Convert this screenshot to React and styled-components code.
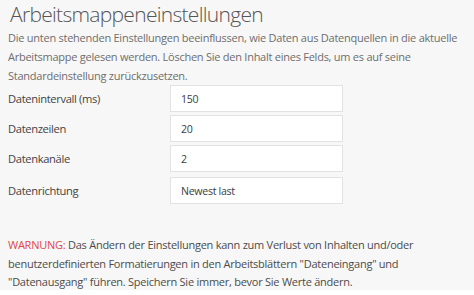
import React from "react";
import styled, { createGlobalStyle } from "styled-components";

const Global = createGlobalStyle`
  html, body { margin: 0; padding: 0; background: #ffffff; }
  body { font-family: "Open Sans", "Noto Sans", sans-serif; }
`;

const Panel = styled.div`
  width: 474px;
  height: 290px;
  background: #f7f7f7;
  box-sizing: border-box;
  padding: 0 8px;
`;

const Title = styled.h1`
  margin: 0;
  padding: 1px 0 0 2px;
  font-family: "Open Sans", sans-serif;
  font-weight: 300;
  font-size: 21px;
  line-height: 27px;
  color: #555555;
  letter-spacing: -0.7px;
`;

const Text = styled.p`
  margin: 0;
  font-size: 11px;
  letter-spacing: -0.25px;
  white-space: nowrap;
`;

const Intro = styled(Text)`
  line-height: 19px;
  color: #6e6e6e;
`;

const Form = styled.div`
  display: flex;
  flex-direction: column;
  gap: 3px;
`;

const Row = styled.div`
  display: flex;
  align-items: center;
  height: 27px;
  margin-top: ${(p) => (p.$extra ? "2px" : "0")};
`;

const Label = styled.label`
  width: 162px;
  font-size: 11.2px;
  letter-spacing: -0.35px;
  color: #444444;
`;

const Field = styled.div`
  width: 173px;
  height: 27px;
  box-sizing: border-box;
  background: #ffffff;
  border: 1px solid #e2e2e2;
  padding: 0 10px;
  display: flex;
  align-items: center;
  font-size: 10.6px;
  letter-spacing: -0.3px;
  color: #3c3c3c;
`;

const Warning = styled(Text)`
  margin-top: 32px;
  line-height: 18.5px;
  color: #4c4c4c;
`;

const Red = styled.span`
  color: #e0454b;
`;

const rows = [
  ["Datenintervall (ms)", "150"],
  ["Datenzeilen", "20"],
  ["Datenkanäle", "2"],
  ["Datenrichtung", "Newest last"],
];

export default function App() {
  return (
    <>
      <Global />
      <Panel>
        <Title>Arbeitsmappeneinstellungen</Title>
        <Intro>
          Die unten stehenden Einstellungen beeinflussen, wie Daten aus Datenquellen in die aktuelle
          <br />
          Arbeitsmappe gelesen werden. Löschen Sie den Inhalt eines Felds, um es auf seine
          <br />
          Standardeinstellung zurückzusetzen.
        </Intro>
        <Form>
          {rows.map(([l, v], i) => (
            <Row key={l} $extra={i === 3}>
              <Label>{l}</Label>
              <Field>{v}</Field>
            </Row>
          ))}
        </Form>
        <Warning>
          <Red>WARNUNG:</Red> Das Ändern der Einstellungen kann zum Verlust von Inhalten und/oder
          <br />
          benutzerdefinierten Formatierungen in den Arbeitsblättern "Dateneingang" und
          <br />
          "Datenausgang" führen. Speichern Sie immer, bevor Sie Werte ändern.
        </Warning>
      </Panel>
    </>
  );
}
